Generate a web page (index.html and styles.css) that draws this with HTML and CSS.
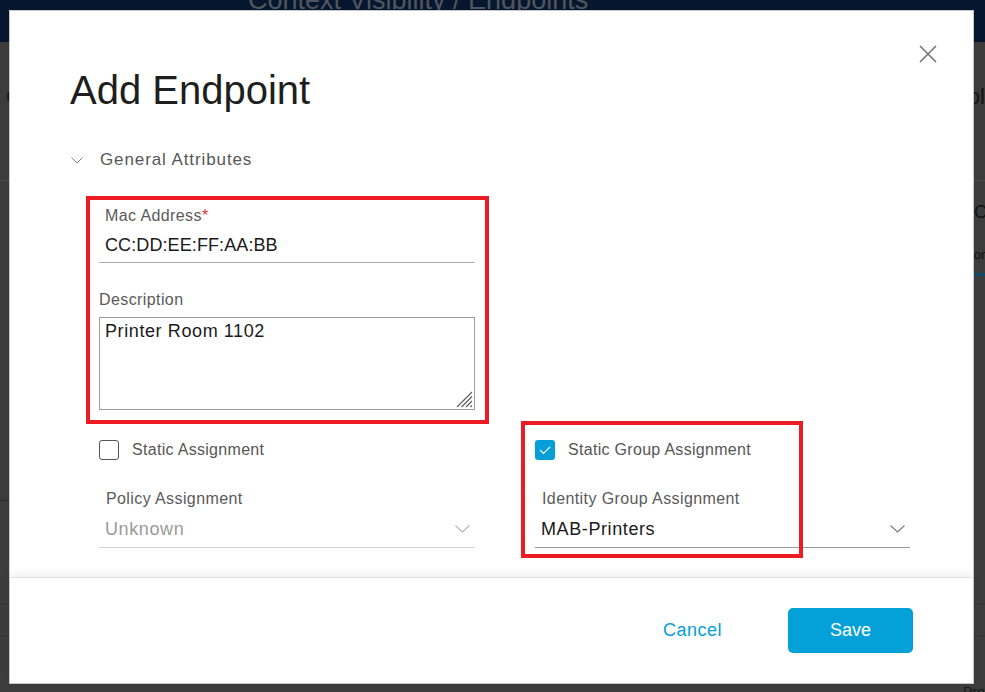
FILE: index.html
```html
<!DOCTYPE html>
<html lang="en">
<head>
<meta charset="utf-8">
<title>Add Endpoint</title>
<link rel="stylesheet" href="styles.css">
</head>
<body>
<div class="page">
  <header class="topbar"><div class="topbar-title">Context Visibility / Endpoints</div></header>
  <div class="page-head">
    <span class="head-left">Context</span>
    <span class="head-right">Access Control</span>
  </div>
  <div class="main-area">
    <div class="left-pane"><div class="filter-block"></div></div>
    <div class="right-pane">
      <div class="pane-title">Context</div>
      <div class="tabs"><span class="tab active">Monitor</span></div>
    </div>
  </div>
  <div class="table">
    <div class="trow"></div>
    <div class="trow"></div>
  </div>
  <div class="pager">Previous</div>

  <div class="modal" role="dialog" aria-labelledby="modal-title">
    <div class="modal-header">
      <h1 class="modal-title" id="modal-title">Add Endpoint</h1>
      <button class="close-btn" aria-label="Close">
        <svg width="18" height="18" viewBox="0 0 18 18"><path d="M1 1 L17 17 M17 1 L1 17" stroke="#6f6f6f" stroke-width="1.5" fill="none"/></svg>
      </button>
    </div>
    <div class="modal-body">
      <div class="section-toggle">
        <svg class="toggle-chevron" width="12" height="7" viewBox="0 0 12 7"><polyline points="0.5,0.5 6,6 11.5,0.5" fill="none" stroke="#8a8a8a" stroke-width="1"/></svg>
        <span class="section-title">General Attributes</span>
      </div>

      <div class="highlight-group">
        <div class="field">
          <div class="field-label indent">Mac Address<span class="req">*</span></div>
          <div class="line-input mac">CC:DD:EE:FF:AA:BB</div>
        </div>
        <div class="field desc-field">
          <div class="field-label">Description</div>
          <div class="textarea-wrap">
            <textarea class="textarea" aria-label="Description">Printer Room 1102</textarea>
            <svg class="grip" width="17" height="17" viewBox="0 0 17 17"><path d="M16 1 L1 16 M16 5.5 L5.5 16 M16 10 L10 16 M16 14.5 L14.5 16" stroke="#5f5f5f" stroke-width="1.2" fill="none"/></svg>
          </div>
        </div>
      </div>

      <div class="assign-grid">
        <div class="assign-col">
          <div class="check-row">
            <span class="checkbox"></span>
            <span class="check-label">Static Assignment</span>
          </div>
          <div class="select-field">
            <div class="field-label indent">Policy Assignment</div>
            <div class="select disabled">
              <span class="select-value">Unknown</span>
              <svg width="15" height="8" viewBox="0 0 15 8"><polyline points="0.5,0.5 7.5,7 14.5,0.5" fill="none" stroke="#b5b5b5" stroke-width="1.1"/></svg>
            </div>
          </div>
        </div>
        <div class="assign-col highlighted">
          <span class="annotation"></span>
          <div class="check-row">
            <span class="checkbox checked">
              <svg width="20" height="20" viewBox="0 0 20 20"><polyline points="5,10 8.5,13.5 15,7" fill="none" stroke="#ffffff" stroke-width="1.2"/></svg>
            </span>
            <span class="check-label">Static Group Assignment</span>
          </div>
          <div class="select-field">
            <div class="field-label indent">Identity Group Assignment</div>
            <div class="select">
              <span class="select-value">MAB-Printers</span>
              <svg width="15" height="8" viewBox="0 0 15 8"><polyline points="0.5,0.5 7.5,7 14.5,0.5" fill="none" stroke="#7a7a7a" stroke-width="1.1"/></svg>
            </div>
          </div>
        </div>
      </div>
    </div>
    <div class="modal-footer">
      <button class="btn-link">Cancel</button>
      <button class="btn-primary">Save</button>
    </div>
  </div>
</div>
</body>
</html>
```

FILE: styles.css
```css
* { box-sizing: border-box; }

html, body {
  margin: 0;
  padding: 0;
}

body {
  font-family: "Liberation Sans", Arial, sans-serif;
  width: 985px;
  height: 692px;
  overflow: hidden;
}

.page {
  position: relative;
  width: 985px;
  height: 692px;
  background: #3c3c3c;
  overflow: hidden;
}

/* ---------- dimmed page behind the dialog ---------- */
.topbar {
  height: 42px;
  background: #06162f;
  padding-left: 248px;
  overflow: hidden;
}

.topbar-title {
  font-size: 27px;
  line-height: 27px;
  margin-top: -13px;
  color: #4f5660;
  white-space: nowrap;
}

.page-head {
  height: 139px;
  border-bottom: 1px solid #4d4d4d;
  display: flex;
  align-items: flex-start;
  padding-top: 42px;
  font-size: 22px;
  line-height: 26px;
  color: #141414;
  white-space: nowrap;
}

.head-left {
  margin-left: 6px;
  width: 6px;
  overflow: hidden;
}

.head-right { margin-left: auto; }

.main-area {
  height: 422px;
  display: flex;
  justify-content: space-between;
}

.left-pane { width: 200px; }

.filter-block {
  height: 320px;
  border-bottom: 1px solid #2c2c2c;
}

.right-pane {
  width: 43px;
  padding-top: 20px;
  white-space: nowrap;
  overflow: hidden;
  color: #121212;
}

.pane-title {
  font-size: 18px;
  line-height: 22px;
  padding-left: 32px;
}

.tabs {
  margin-top: 24px;
  display: flex;
}

.tab {
  font-size: 13px;
  line-height: 16px;
  padding-bottom: 10px;
}

.tab.active { border-bottom: 3px solid #0e4a6a; }

.trow {
  height: 32px;
  border-top: 1px solid #333333;
}

.pager {
  padding-left: 963px;
  padding-top: 17px;
  font-size: 14px;
  color: #161616;
  white-space: nowrap;
}

/* ---------- dialog ---------- */
.modal {
  position: absolute;
  left: 9px;
  top: 10px;
  width: 965px;
  height: 674px;
  background: #ffffff;
  border: 1px solid #c9c9c9;
  display: flex;
  flex-direction: column;
}

.modal-header {
  display: flex;
  justify-content: space-between;
  align-items: flex-start;
  padding: 34px 36px 0 60px;
}

.modal-title {
  margin: 21px 0 0;
  font-size: 40px;
  line-height: 48px;
  font-weight: normal;
  color: #1e1e1e;
}

.close-btn {
  width: 18px;
  height: 18px;
  padding: 0;
  border: 0;
  background: none;
  display: block;
}

.close-btn svg { display: block; }

.modal-body {
  flex: 1;
  padding-left: 60px;
}

.section-toggle {
  margin-top: 34px;
  height: 24px;
  display: flex;
  align-items: center;
}

.toggle-chevron {
  margin-left: 1px;
  margin-right: 17px;
  display: block;
}

.section-title {
  font-size: 17px;
  line-height: 24px;
  letter-spacing: 0.9px;
  color: #575757;
}

.highlight-group {
  margin-top: 24px;
  margin-left: 16px;
  width: 403px;
  border: 4px solid #ec1b24;
  padding: 6px 10px 10px 9px;
}

.field-label {
  font-size: 16px;
  line-height: 20px;
  letter-spacing: 0.4px;
  color: #5a5a5a;
}

.field-label.indent { padding-left: 6px; }

.req { color: #d9382e; }

.line-input {
  margin-top: 7px;
  height: 30px;
  padding: 0 6px 5px;
  border-bottom: 1px solid #ababab;
  font-size: 18px;
  line-height: 24px;
  color: #1a1a1a;
}

.line-input.mac { letter-spacing: 0.1px; }

.desc-field { margin-top: 27px; }

.textarea-wrap {
  position: relative;
  margin-top: 7px;
  width: 376px;
  height: 93px;
}

.textarea {
  display: block;
  width: 376px;
  height: 93px;
  padding: 2px 5px;
  border: 1px solid #9d9d9d;
  border-radius: 0;
  resize: none;
  font-family: "Liberation Sans", Arial, sans-serif;
  font-size: 18px;
  line-height: 22px;
  letter-spacing: 0.6px;
  color: #1a1a1a;
  outline: none;
}

.grip {
  position: absolute;
  right: 2px;
  bottom: 2px;
  display: block;
  pointer-events: none;
}

.assign-grid {
  margin-top: 16px;
  margin-left: 29px;
  display: grid;
  grid-template-columns: 376px 375px;
  column-gap: 60px;
}

.assign-col.highlighted { position: relative; }

.annotation {
  position: absolute;
  left: -14px;
  top: -19px;
  width: 282px;
  height: 137px;
  border: 4px solid #ec1b24;
  pointer-events: none;
}

.check-row {
  height: 20px;
  display: flex;
  align-items: center;
  gap: 13px;
}

.checkbox {
  width: 20px;
  height: 20px;
  border: 1.5px solid #555555;
  border-radius: 3px;
  background: #ffffff;
  flex: none;
}

.checkbox.checked {
  border: 0;
  background: #049fd9;
}

.checkbox svg { display: block; }

.check-label {
  font-size: 16px;
  line-height: 20px;
  letter-spacing: 0.3px;
  color: #565656;
}

.select-field { margin-top: 29px; }

.select-field .field-label.indent { padding-left: 7px; }

.select {
  margin-top: 8px;
  height: 31px;
  padding: 0 5px 6px 6px;
  border-bottom: 1px solid #9a9a9a;
  display: flex;
  justify-content: space-between;
  align-items: center;
}

.select svg { display: block; }

.select-value {
  font-size: 18px;
  line-height: 24px;
  letter-spacing: 0.6px;
  color: #1a1a1a;
}

.select.disabled { border-bottom-color: #d2d2d2; }
.select.disabled .select-value { color: #9a9a9a; }

.modal-footer {
  height: 106px;
  border-top: 1px solid #e2e2e2;
  box-shadow: 0 -4px 8px rgba(0, 0, 0, 0.06);
  display: flex;
  justify-content: flex-end;
  align-items: center;
  padding-right: 60px;
}

.btn-link {
  margin-right: 66px;
  padding: 0;
  border: 0;
  background: none;
  font-family: "Liberation Sans", Arial, sans-serif;
  font-size: 18px;
  letter-spacing: 0.5px;
  color: #049fd9;
}

.btn-primary {
  width: 125px;
  height: 45px;
  padding: 0;
  border: 0;
  border-radius: 5px;
  background: #04a1d9;
  font-family: "Liberation Sans", Arial, sans-serif;
  font-size: 18px;
  color: #ffffff;
}
```
